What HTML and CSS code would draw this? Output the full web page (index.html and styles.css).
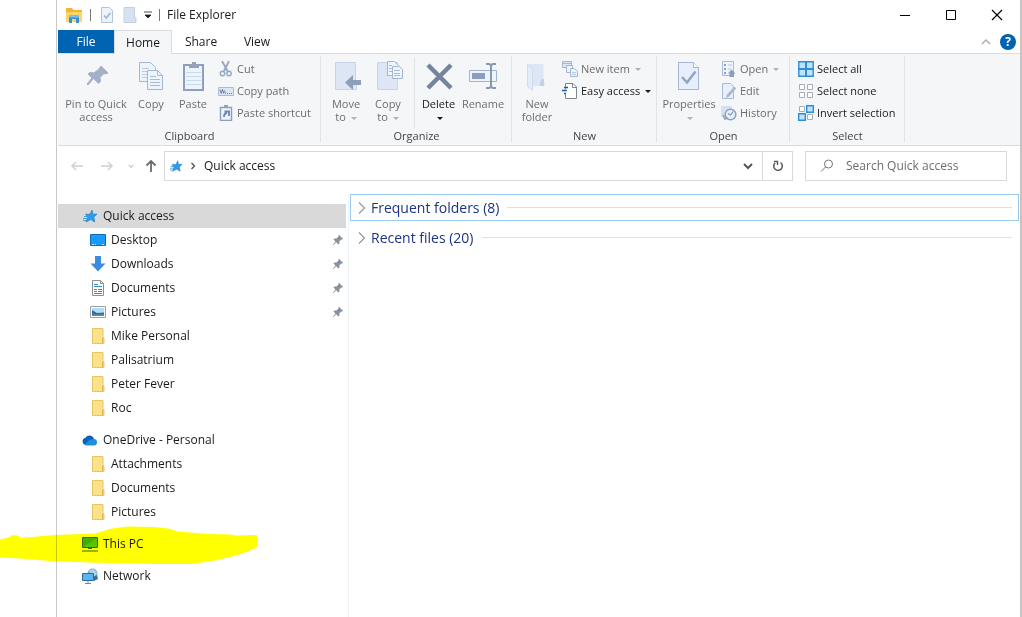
FILE: index.html
```
<!DOCTYPE html>
<html lang="en">
<head>
    <meta charset="UTF-8">
    <meta name="viewport" content="width=device-width, initial-scale=1.0">
    <title>File Explorer</title>
    <link rel="stylesheet" href="styles.css">
</head>
<body>

    <!-- Shared icons -->
    <svg class="defs" aria-hidden="true">
        <symbol id="star" viewBox="0 0 16 16">
            <path d="M10 2l.8 4 4.200.2-3.200 2.800 1 5-4-2.400L4 14l1.700-4.500L3.500 6.200H8z" fill="#2a9df0" stroke="#1b76bd" stroke-width=".6"/>
            <path d="M2 8.500h3M1 10.500h4M1 12.500h3" stroke="#4f9cd0" stroke-width="1"/>
        </symbol>
        <symbol id="folder" viewBox="0 0 16 16">
            <path d="M2.500.5h10.500v9.500l1 .8v4.700H2.500z" fill="#fde08a" stroke="#e6c660"/>
            <path d="M12.500 15V11l1.500-1.500" fill="none" stroke="#d6ae42"/>
        </symbol>
        <symbol id="pin" viewBox="0 0 12 12">
            <path d="M7 .8L11.200 5l-1.200.6-.7-.2-2 2 .1 2-1 1L4.200 8.300 1 11.300l-.4-.4L3.500 7.600 1.400 5.500l1-1 2.100.1 2-2-.1-.8z" fill="#87929b"/>
        </symbol>
        <symbol id="chevron-down" viewBox="0 0 10 10">
            <path d="M1 3l4 4 4-4" fill="none" stroke="currentColor" stroke-width="2"/>
        </symbol>
        <symbol id="chevron-right" viewBox="0 0 10 14">
            <path d="M2 1.500L7.500 7 2 12.500" fill="none" stroke="currentColor" stroke-width="1.200"/>
        </symbol>
    </svg>

    <div class="window">

        <!-- Title Bar -->
        <header class="titlebar">
            <svg class="app-icon" viewBox="0 0 18 18">
                <path d="M1 2h6l1.500 2H17v11H1z" fill="#f3b62f"/>
                <path d="M1 6h16v10H1z" fill="#fdd667"/>
                <path d="M4 17V9.500h10V17h-3v-4H7v4z" fill="#3c8fcc"/>
                <path d="M4 9.500h10v2H4z" fill="#7cc0e8"/>
            </svg>
            <span class="bar"></span>
            <button class="quick" aria-label="Properties">
                <svg width="14" height="16" viewBox="0 0 14 16">
                    <path d="M1.500.5h8l3 3v12h-11z" fill="#edf3fb" stroke="#b4c3d8"/>
                    <path d="M4 8.500l2.300 2.500 4-5" fill="none" stroke="#9db2cf" stroke-width="1.600"/>
                </svg>
            </button>
            <button class="quick" aria-label="New folder">
                <svg width="14" height="16" viewBox="0 0 14 16">
                    <path d="M1 .5h10.500v9.500l1.500 1v4.500H1z" fill="#d7e2f1" stroke="#c3d1e5"/>
                </svg>
            </button>
            <button class="quick-menu" aria-label="Customize">
                <svg width="8" height="8" viewBox="0 0 8 8"><path d="M0 1h8M1 4h6L4 7z" stroke="#222" fill="#222" stroke-width=".8"/></svg>
            </button>
            <span class="bar"></span>
            <span class="title">File Explorer</span>
            <div class="window-buttons">
                <button aria-label="Minimize"><svg width="12" height="12" viewBox="0 0 12 12"><path d="M1 6.500h10" stroke="#000"/></svg></button>
                <button aria-label="Maximize"><svg width="12" height="12" viewBox="0 0 12 12"><path d="M1.500 1.500h9v9h-9z" fill="none" stroke="#000"/></svg></button>
                <button aria-label="Close"><svg width="12" height="12" viewBox="0 0 12 12"><path d="M1 1l10 10M11 1L1 11" stroke="#000" stroke-width="1.200"/></svg></button>
            </div>
        </header>

        <!-- Tabs -->
        <nav class="tabs">
            <button class="tab file">File</button>
            <button class="tab active">Home</button>
            <button class="tab">Share</button>
            <button class="tab">View</button>
            <div class="tab-tools">
                <button class="collapse" aria-label="Minimize the Ribbon">
                    <svg width="10" height="8" viewBox="0 0 10 8"><path d="M1 6l4-4 4 4" fill="none" stroke="#aaa" stroke-width="1.400"/></svg>
                </button>
                <button class="help">?</button>
            </div>
        </nav>

        <!-- Ribbon -->
        <section class="ribbon">
            <div class="group">
                <div class="tools">
                    <button class="big wide">
                        <svg viewBox="0 0 32 32">
                            <path d="M21 5l7 7-2.500 1-1.500-.5-4 4 .5 4-2 2-5-5L8 24l-1-1 5-6-4-4 2-1.500 4 .5 5-4z" fill="#a3b1c8" stroke="#a3b1c8"/>
                        </svg>
                        <span>Pin to Quick<br>access</span>
                    </button>
                    <button class="big">
                        <svg viewBox="0 0 32 32">
                            <path d="M4.500 1.500h11l5 5v14h-16z" fill="#eef4fc" stroke="#a3b6d2"/>
                            <path d="M7 7.500h7M7 10.500h11M7 13.500h11M7 16.500h11" stroke="#b9c8df"/>
                            <path d="M12.500 9.500h10l5 5v14h-15z" fill="#eef4fc" stroke="#a3b6d2"/>
                            <path d="M22.500 9.500v5h5M15 15.500h6M15 18.500h10M15 21.500h10M15 24.500h10" fill="none" stroke="#a9bbd6"/>
                        </svg>
                        <span>Copy</span>
                    </button>
                    <button class="big">
                        <svg viewBox="0 0 32 32">
                            <path d="M7 4h19v25H7z" fill="#edf4fd" stroke="#8d9fbd" stroke-width="2"/>
                            <path d="M12 3h3V1h4v2h3v4H12z" fill="#93a3bc"/>
                            <path d="M9 11.500h15M9 15.500h15M9 19.500h15M9 23.500h15" stroke="#cbd9ec"/>
                        </svg>
                        <span>Paste</span>
                    </button>
                    <div class="stack">
                        <button class="small">
                            <svg viewBox="0 0 16 16">
                                <path d="M4 0l5.500 10M11 0L6 10" stroke="#96a6bd" stroke-width="1.800"/>
                                <circle cx="4.500" cy="12.500" r="2.200" fill="none" stroke="#8fa9cd" stroke-width="1.400"/>
                                <circle cx="11" cy="12.500" r="2.200" fill="none" stroke="#8fa9cd" stroke-width="1.400"/>
                            </svg>
                            Cut
                        </button>
                        <button class="small">
                            <svg viewBox="0 0 16 16">
                                <path d="M.5 4.500h15v8H.5z" fill="#dbe7f7" stroke="#a9bcd8"/>
                                <path d="M2 6.500l1.300 4 1.200-4 1.300 4M7.500 10.500l-1-3" fill="none" stroke="#62789c"/>
                                <path d="M9 10.500h1M11 10.500h1M13 10.500h1" stroke="#62789c"/>
                            </svg>
                            Copy path
                        </button>
                        <button class="small">
                            <svg viewBox="0 0 16 16">
                                <path d="M2.500 2.500h11v13h-11z" fill="#edf4fd" stroke="#8d9fbd" stroke-width="1.400"/>
                                <path d="M6 0h4v3H6z" fill="#93a3bc"/>
                                <path d="M6 12c0-3 1-4 3-4M6.500 6.500H11V11" fill="none" stroke="#6d86ad" stroke-width="1.800"/>
                            </svg>
                            Paste shortcut
                        </button>
                    </div>
                </div>
                <div class="group-name">Clipboard</div>
            </div>

            <div class="group">
                <div class="tools">
                    <button class="big">
                        <svg viewBox="0 0 32 32">
                            <path d="M5.500 1.500h20v22l1 1v4h-21z" fill="#dce6f4" stroke="#c7d5e9"/>
                            <path d="M31 19v5h-8v5l-8-7.500 8-7.500v5z" fill="#8e9fbc"/>
                        </svg>
                        <span>Move<br>to <i class="caret"></i></span>
                    </button>
                    <button class="big">
                        <svg viewBox="0 0 32 32">
                            <path d="M5.500 1.500h20v27h-20z" fill="#dce6f4" stroke="#c7d5e9"/>
                            <path d="M15.500.5h7l4 4v10h-11z" fill="#eef4fc" stroke="#a3b6d2"/>
                            <path d="M20.500 5.500h7l3 3v9h-10z" fill="#eef4fc" stroke="#a3b6d2"/>
                            <path d="M17 4.500h3M17 7.500h3M17 10.500h3M22 9.500h6M22 12.500h6M22 14.500h6" stroke="#a9bbd6"/>
                        </svg>
                        <span>Copy<br>to <i class="caret"></i></span>
                    </button>
                    <button class="big enabled divided">
                        <svg viewBox="0 0 32 32">
                            <path d="M5 4l23 23M28 4L5 27" stroke="#75849d" stroke-width="4.500"/>
                        </svg>
                        <span>Delete<br><i class="caret"></i></span>
                    </button>
                    <button class="big">
                        <svg viewBox="0 0 32 32">
                            <path d="M2.500 9.500h27v11h-27z" fill="#edf4fd" stroke="#9fb4d3"/>
                            <path d="M5 12h13v6H5z" fill="#8b9ebf"/>
                            <path d="M19 3h3.500l1.500 1.500L25.500 3H29M19 27h3.500l1.500-1.500 1.500 1.500H29M24 4v22" fill="none" stroke="#8798b5" stroke-width="2"/>
                        </svg>
                        <span>Rename</span>
                    </button>
                </div>
                <div class="group-name">Organize</div>
            </div>

            <div class="group">
                <div class="tools">
                    <button class="big">
                        <svg viewBox="0 0 32 32">
                            <path d="M7.500 3h15v17l1 1v4H12l-4.500-3z" fill="#dce6f4"/>
                            <path d="M6.500 3.500l5 4v22l-5-4z" fill="#e3ecf8" stroke="#d0dcee"/>
                            <path d="M19 21l2-3h2v7h-4z" fill="#c2d1e8"/>
                        </svg>
                        <span>New<br>folder</span>
                    </button>
                    <div class="stack">
                        <button class="small">
                            <svg viewBox="0 0 16 16">
                                <path d="M.5.5h9v6h-9z" fill="#dce6f4" stroke="#a3b6d2"/>
                                <path d="M.5 2.500h9" stroke="#a3b6d2"/>
                                <path d="M4.500 4.500h6v7h-6z" fill="#eef4fc" stroke="#a3b6d2"/>
                                <path d="M8.500 7.500h4l3 3v5h-7z" fill="#eef4fc" stroke="#a3b6d2"/>
                                <path d="M10 11.500h4M10 13.500h4" stroke="#b9c8df"/>
                            </svg>
                            New item <i class="caret"></i>
                        </button>
                        <button class="small enabled">
                            <svg viewBox="0 0 16 16">
                                <path d="M3.500 6V.5h7.500l3.500 3.500v11.500h-11V11" fill="#fff" stroke="#7c8794"/>
                                <path d="M10.500.5v4h4" fill="none" stroke="#7c8794"/>
                                <path d="M2 4.500h4M0 7.500h5M2 10.500h2" stroke="#1c5c9c" stroke-width="1.400"/>
                            </svg>
                            Easy access <i class="caret"></i>
                        </button>
                    </div>
                </div>
                <div class="group-name">New</div>
            </div>

            <div class="group">
                <div class="tools">
                    <button class="big medium">
                        <svg viewBox="0 0 32 32">
                            <path d="M5.500 1.500h15l5 5v22h-20z" fill="#e6effb" stroke="#a3b6d2"/>
                            <path d="M20.500 1.500v5h5" fill="#fff" stroke="#a3b6d2"/>
                            <path d="M9 16l5 5.500 8.500-11" fill="none" stroke="#93a5c2" stroke-width="2.500"/>
                        </svg>
                        <span>Properties<br><i class="caret"></i></span>
                    </button>
                    <div class="stack">
                        <button class="small">
                            <svg viewBox="0 0 16 16">
                                <path d="M1.500.5h11v14h-11z" fill="#eef4fc" stroke="#a9bbd6"/>
                                <path d="M3 3h2v2H3zM3 7h2v2H3zM3 11h2v2H3z" fill="#8ea2c3"/>
                                <path d="M7 4h4M7 8h3" stroke="#b9c8df"/>
                                <path d="M8.500 16v-3.500H7L10.500 8.500l4 4H13V16z" fill="#8b9dbb"/>
                            </svg>
                            Open <i class="caret"></i>
                        </button>
                        <button class="small">
                            <svg viewBox="0 0 16 16">
                                <path d="M1.500.5h8l3 3v12h-11z" fill="#e6effb" stroke="#a9bbd6"/>
                                <path d="M5 15l1-3.500 7.500-8 1.500 2-7 8z" fill="#a5b6d0"/>
                            </svg>
                            Edit
                        </button>
                        <button class="small">
                            <svg viewBox="0 0 16 16">
                                <path d="M0 1h11v11H0z" fill="#d5e1f1"/>
                                <circle cx="9.500" cy="9.500" r="5.300" fill="#e8f0fb" stroke="#8ea2c3" stroke-width="1.600"/>
                                <path d="M12 6.500L9.500 10 7 8.500" fill="none" stroke="#7f94b7" stroke-width="1.200"/>
                                <path d="M2 10l2 4 3-1" fill="none" stroke="#8ea2c3" stroke-width="1.600"/>
                            </svg>
                            History
                        </button>
                    </div>
                </div>
                <div class="group-name">Open</div>
            </div>

            <div class="group">
                <div class="tools">
                    <div class="stack">
                        <button class="small enabled">
                            <svg viewBox="0 0 16 16">
                                <path d="M.8.8h14.400v14.400H.8z" fill="#bfe3fb" stroke="#2f8dd8" stroke-width="1.400"/>
                                <path d="M8 0v16M0 8h16" stroke="#2f8dd8" stroke-width="2"/>
                            </svg>
                            Select all
                        </button>
                        <button class="small enabled">
                            <svg viewBox="0 0 16 16">
                                <path d="M1.500 1.500h5v5h-5zM9.500 1.500h5v5h-5zM1.500 9.500h5v5h-5zM9.500 9.500h5v5h-5z" fill="#fff" stroke="#a7adb5"/>
                            </svg>
                            Select none
                        </button>
                        <button class="small enabled">
                            <svg viewBox="0 0 16 16">
                                <path d="M1.500 1.500h5v5h-5zM9.500 9.500h5v5h-5z" fill="#fff" stroke="#a7adb5"/>
                                <path d="M8.700.7h6.600v6.600H8.700zM.7 8.700h6.600v6.600H.7z" fill="#bfe3fb" stroke="#2f8dd8" stroke-width="1.400"/>
                            </svg>
                            Invert selection
                        </button>
                    </div>
                </div>
                <div class="group-name">Select</div>
            </div>
        </section>

        <!-- Address Bar -->
        <div class="addressbar">
            <div class="history">
                <button aria-label="Back"><svg width="14" height="14" viewBox="0 0 14 14"><path d="M13 7H2M6 3L2 7l4 4" fill="none" stroke="#d0d0d0" stroke-width="1.500"/></svg></button>
                <button aria-label="Forward"><svg width="14" height="14" viewBox="0 0 14 14"><path d="M1 7h11M8 3l4 4-4 4" fill="none" stroke="#d0d0d0" stroke-width="1.500"/></svg></button>
                <button class="recent" aria-label="Recent locations"><svg width="6" height="6"><use href="#chevron-down"/></svg></button>
                <button class="up" aria-label="Up"><svg width="14" height="14" viewBox="0 0 14 14"><path d="M7 13V2M2.500 6.500L7 2l4.500 4.500" fill="none" stroke="#6b6b6b" stroke-width="1.800"/></svg></button>
            </div>
            <div class="address">
                <svg width="14" height="14"><use href="#star"/></svg>
                <svg class="crumb-arrow" width="6" height="8" viewBox="0 0 6 8"><path d="M1.500 1l3 3-3 3" fill="none" stroke="currentColor" stroke-width="1.400"/></svg>
                <a href="#">Quick access</a>
                <button class="drop" aria-label="Previous locations"><svg width="10" height="10"><use href="#chevron-down"/></svg></button>
                <button class="refresh" aria-label="Refresh">
                    <svg width="12" height="12" viewBox="0 0 12 12">
                        <path d="M8.500 2.500A4.300 4.300 0 1 1 3 3" fill="none" stroke="#555" stroke-width="1.500"/>
                        <path d="M2 1.500h3.500V5" fill="none" stroke="#555" stroke-width="1.400"/>
                    </svg>
                </button>
            </div>
            <label class="search">
                <svg width="14" height="14" viewBox="0 0 14 14">
                    <circle cx="8.500" cy="5" r="4" fill="none" stroke="#777"/>
                    <path d="M5.500 8L1 12.500" stroke="#777"/>
                </svg>
                <input type="text" placeholder="Search Quick access" aria-label="Search Quick access">
            </label>
        </div>

        <div class="content">

            <!-- Navigation Pane -->
            <nav class="sidebar">
                <div class="tree">
                    <a class="item selected" href="#"><svg class="icon"><use href="#star"/></svg>Quick access</a>
                    <a class="item child" href="#">
                        <svg class="icon" viewBox="0 0 16 16"><path d="M.5 2.500h15v11H.5z" fill="#1a9bfc" stroke="#0d6fc0"/><path d="M2 12.500h2M5 12.500h1M12 12.500h2" stroke="#bfe3fb"/></svg>
                        Desktop<svg class="pin"><use href="#pin"/></svg>
                    </a>
                    <a class="item child" href="#">
                        <svg class="icon" viewBox="0 0 16 16"><path d="M5 0h6v7.500h4.500L8 15.500.5 7.500H5z" fill="#3a8ddd"/></svg>
                        Downloads<svg class="pin"><use href="#pin"/></svg>
                    </a>
                    <a class="item child" href="#">
                        <svg class="icon" viewBox="0 0 16 16">
                            <path d="M2.500.5h8l3 3v12h-11z" fill="#fff" stroke="#87919b"/>
                            <path d="M10.500.5v3h3" fill="none" stroke="#87919b"/>
                            <path d="M4 4.500h4M4 6.500h8M4 9.500h3M8 9.500h4M4 11.500h3M8 11.500h4M4 13.500h8" stroke="#3c87c4"/>
                        </svg>
                        Documents<svg class="pin"><use href="#pin"/></svg>
                    </a>
                    <a class="item child" href="#">
                        <svg class="icon" viewBox="0 0 16 16">
                            <path d="M.5 2.500h15v11H.5z" fill="#fff" stroke="#9aa1a8"/>
                            <path d="M2 4h12v8H2z" fill="#b5dcf5"/>
                            <path d="M2 6l5 3 7-.5V12H2z" fill="#3d6f83"/>
                            <path d="M2 10.500h12V12H2z" fill="#4b91d3"/>
                        </svg>
                        Pictures<svg class="pin"><use href="#pin"/></svg>
                    </a>
                    <a class="item child" href="#"><svg class="icon"><use href="#folder"/></svg>Mike Personal</a>
                    <a class="item child" href="#"><svg class="icon"><use href="#folder"/></svg>Palisatrium</a>
                    <a class="item child" href="#"><svg class="icon"><use href="#folder"/></svg>Peter Fever</a>
                    <a class="item child" href="#"><svg class="icon"><use href="#folder"/></svg>Roc</a>
                </div>
                <div class="tree">
                    <a class="item" href="#">
                        <svg class="icon" viewBox="0 0 16 16">
                            <path d="M4 13a3.700 3.700 0 0 1-.5-7.300A4.800 4.800 0 0 1 12 6.500L13 13z" fill="#0a63b8"/>
                            <path d="M3.500 13.500c1-4.500 5-6.500 8.500-6.500a3.300 3.300 0 0 1 .5 6.500z" fill="#1f8fe6"/>
                        </svg>
                        OneDrive - Personal
                    </a>
                    <a class="item child" href="#"><svg class="icon"><use href="#folder"/></svg>Attachments</a>
                    <a class="item child" href="#"><svg class="icon"><use href="#folder"/></svg>Documents</a>
                    <a class="item child" href="#"><svg class="icon"><use href="#folder"/></svg>Pictures</a>
                </div>
                <div class="tree">
                    <a class="item marked" href="#">
                        <svg class="icon" viewBox="0 0 16 16">
                            <path d="M.5 1.500h15v10H.5z" fill="#3fae2a" stroke="#3c6b3c"/>
                            <path d="M1 11L15 2v9z" fill="#58c436"/>
                            <path d="M6 12.500h4" stroke="#4d7a4d"/>
                            <path d="M0 15h16" stroke="#5d7d8d" stroke-width="1.200"/>
                        </svg>
                        This PC
                        <!-- yellow highlighter stroke -->
                        <svg class="highlighter" viewBox="0 0 258 40">
                            <path d="M0 13.500L10 11l2-2 6 .5 2 2.500 35-3 40-1.500 17-5L128 .500l26 .5 14 1.500 10 3 30 2.500 22 .5 6 1 21-.5V21l-10 5-17 5-20 4.500-20 2.500H150L90 36.500 50 35 20 32.500 0 31.500z" fill="#ffff00"/>
                        </svg>
                    </a>
                </div>
                <div class="tree">
                    <a class="item" href="#">
                        <svg class="icon" viewBox="0 0 16 16">
                            <circle cx="10.500" cy="5.500" r="5" fill="#7fb2d6"/>
                            <path d="M7 3l4-2 4 4-3 4z" fill="#b4d4e8"/>
                            <path d="M11 9l4-2 1 4-4 2z" fill="#3f7096"/>
                            <path d="M.5 5.500h11v7H.5z" fill="#5bb5f2" stroke="#2a6d9f"/>
                            <path d="M6 13v2M3 15.500h6" stroke="#6a8ba3"/>
                        </svg>
                        Network
                    </a>
                </div>
            </nav>

            <!-- File List -->
            <main class="files">
                <button class="section focused"><svg width="10" height="14"><use href="#chevron-right"/></svg><span>Frequent folders (8)</span></button>
                <button class="section"><svg width="10" height="14"><use href="#chevron-right"/></svg><span>Recent files (20)</span></button>
            </main>
        </div>
    </div>

</body>
</html>
```
FILE: styles.css
```
/* General Styles */
* {
    box-sizing: border-box;
}

body {
    margin: 0;
    font-family: 'Open Sans', sans-serif;
    font-size: 12px;
    line-height: 16px;
    color: #1a1a1a;
    background: #fff;
}

button {
    padding: 0;
    border: none;
    background: none;
    font: inherit;
    color: inherit;
    white-space: nowrap;
}

a {
    color: inherit;
    text-decoration: none;
}

svg {
    display: block;
    flex: none;
}

.defs {
    display: none;
}

.window {
    display: flex;
    flex-direction: column;
    min-height: 100vh;
    margin-left: 56px;
    padding-left: 1px;
    border-left: 1px solid #c8c8c8;
    border-right: 2px solid #c4c4c4;
}

/* Title Bar */
.titlebar {
    display: flex;
    align-items: center;
    height: 30px;
    padding-left: 7px;
}

.app-icon {
    width: 18px;
    height: 18px;
}

.bar {
    width: 1px;
    height: 12px;
    margin: 0 7px;
    background: #777;
}

.quick {
    margin-left: 2px;
    margin-right: 7px;
}

.title {
    font-size: 12px;
}

.window-buttons {
    display: flex;
    margin-left: auto;
}

.window-buttons button {
    display: flex;
    justify-content: center;
    width: 46px;
}

/* Tabs */
.tabs {
    display: flex;
    height: 23px;
}

.tab {
    width: 58px;
    height: 24px;
}

.tab.file {
    width: 56px;
    color: #fff;
    background: #0063b1;
}

.tab.active {
    position: relative;
    border: 1px solid #dadbdc;
    border-bottom: none;
    background: #f5f6f7;
}

.tab:last-of-type {
    width: 54px;
}

.tab-tools {
    display: flex;
    align-items: center;
    gap: 9px;
    margin-left: auto;
    padding-right: 4px;
}

.help {
    width: 16px;
    height: 16px;
    border-radius: 50%;
    color: #fff;
    background: #0063b1;
    font-weight: bold;
}

/* Ribbon */
.ribbon {
    display: grid;
    grid-template-columns: 263px 191px 145px 133px 115px;
    border: solid #dadbdc;
    border-width: 1px 0;
    background: #f5f6f7;
    font-size: 11px;
}

.group {
    position: relative;
    padding: 4px 0 1px 4px;
}

/* Line between two groups */
.group::after {
    content: "";
    position: absolute;
    top: 2px;
    right: 0;
    bottom: 3px;
    width: 1px;
    background: #e2e3e4;
}

.tools {
    display: flex;
    height: 70px;
}

.group-name {
    padding-right: 4px;
    color: #444;
    text-align: center;
}

.big {
    display: flex;
    flex-direction: column;
    align-items: center;
    width: 42px;
    padding-top: 3px;
    color: #6d6d6d;
    line-height: 13px;
}

.big svg {
    width: 32px;
    height: 32px;
    margin-bottom: 4px;
}

.big.medium {
    width: 56px;
}

.big.wide {
    width: 68px;
}

.stack {
    display: flex;
    flex-direction: column;
    padding-left: 4px;
}

.small {
    display: flex;
    align-items: center;
    gap: 3px;
    height: 22px;
    color: #6d6d6d;
}

.small svg {
    width: 16px;
    height: 16px;
}

.enabled {
    color: #1a1a1a;
}

.divided {
    width: 48px;
    margin-left: 5px;
    border-left: 1px solid #e2e3e4;
}

.caret {
    display: inline-block;
    margin-left: 2px;
    border: 3px solid transparent;
    border-top-color: #b0b0b0;
    border-bottom: none;
    vertical-align: middle;
}

.enabled .caret {
    border-top-color: #1a1a1a;
}

/* Address Bar */
.addressbar {
    display: flex;
    height: 40px;
    padding: 5px 13px 5px 12px;
}

.history {
    display: flex;
    align-items: center;
    gap: 16px;
    width: 94px;
}

.recent {
    margin-left: -2px;
    margin-right: -6px;
    color: #c8c8c8;
}

.address {
    display: flex;
    flex: 1;
    align-items: center;
    padding-left: 4px;
    border: 1px solid #d9d9d9;
}

.crumb-arrow {
    margin: 0 8px 0 7px;
    color: #555;
}

.drop {
    margin: 0 9px 0 auto;
    color: #555;
}

.refresh {
    display: flex;
    align-items: center;
    justify-content: center;
    width: 30px;
    height: 28px;
    border-left: 1px solid #d9d9d9;
}

.search {
    display: flex;
    flex: 0 1 202px;
    align-items: center;
    gap: 12px;
    margin-left: 12px;
    padding: 0 14px;
    border: 1px solid #d9d9d9;
}

.search input {
    width: 100%;
    padding: 0;
    border: none;
    outline: none;
    font: inherit;
}

.search input::placeholder {
    color: #6d6d6d;
}

/* Navigation Pane */
.content {
    display: flex;
    flex: 1;
    padding-top: 8px;
}

.sidebar {
    display: flex;
    flex-direction: column;
    flex: 0 0 291px;
    gap: 8px;
    padding: 10px 2px 28px 0;
    border-right: 1px solid #f0f3f6;
}

.item {
    position: relative;
    display: flex;
    align-items: center;
    gap: 5px;
    height: 24px;
    padding-left: 24px;
}

.item.child {
    padding-left: 32px;
}

.item.selected {
    background: #d9d9d9;
}

.icon {
    width: 16px;
    height: 16px;
}

.pin {
    width: 12px;
    height: 12px;
    margin-left: auto;
    margin-right: 2px;
}

.highlighter {
    position: absolute;
    top: -6px;
    left: -58px;
    width: 258px;
    height: 40px;
    mix-blend-mode: multiply;
}

/* File List */
.files {
    flex: 1;
    padding: 0 1px;
}

.section {
    display: flex;
    align-items: center;
    width: 100%;
    height: 27px;
    margin-bottom: 3px;
    padding: 0 6px;
    border: 1px solid transparent;
    color: #1e3287;
    font-size: 14px;
}

.section svg {
    margin-right: 4px;
    color: #999;
}

.section::after {
    content: "";
    flex: 1;
    height: 1px;
    margin-left: 8px;
    background: #dfe3e8;
}

.section.focused {
    border-color: #99c9ef;
}

.section.focused::after {
    background: #cfe3f2;
}
```
